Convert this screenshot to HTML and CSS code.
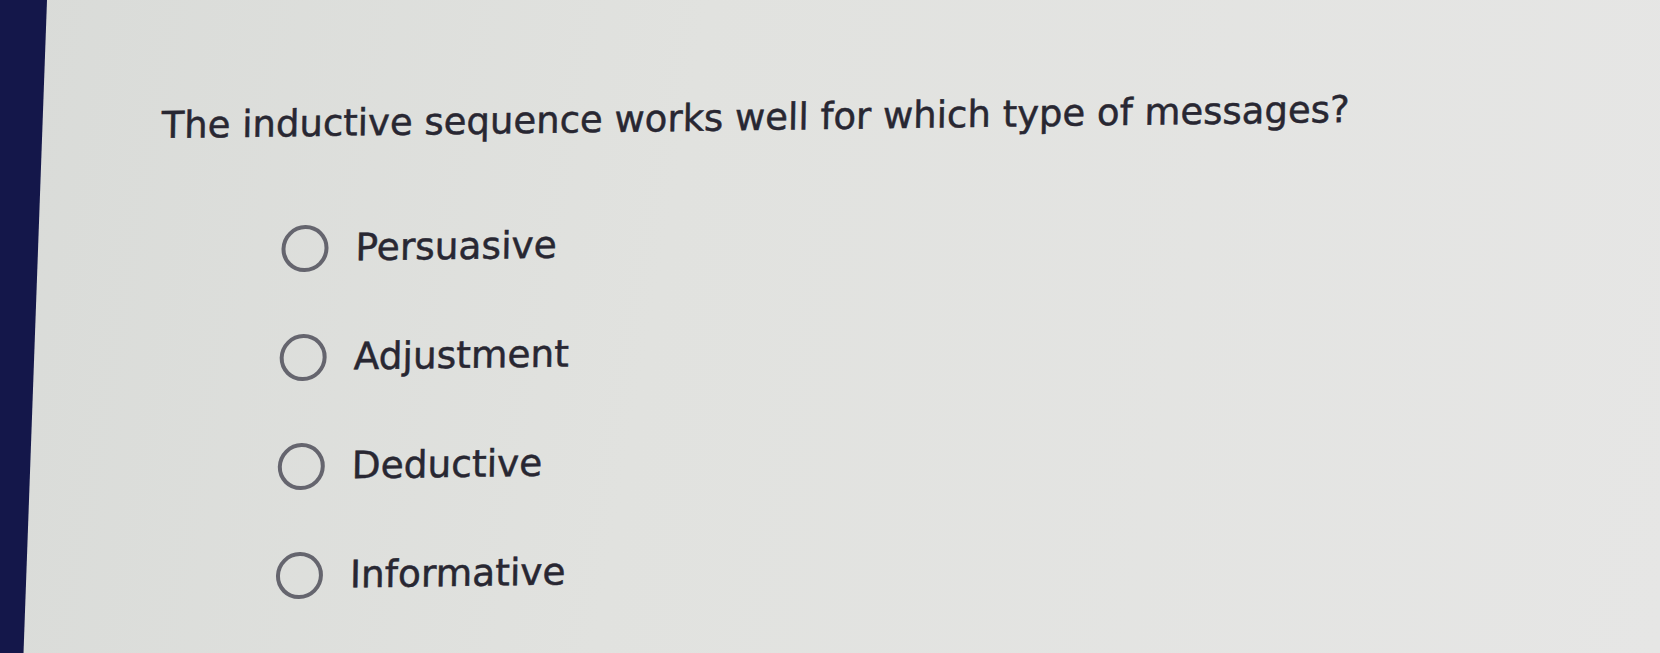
FILE: index.html
```html
<!DOCTYPE html>
<html lang="en">
<head>
  <meta charset="UTF-8">
  <meta name="viewport" content="width=device-width, initial-scale=1.0">
  <link rel="stylesheet" href="styles.css">
</head>
<body>

  <div class="side-bar"></div>

  <main class="quiz">
    <div class="question">
      <h1 class="question-text">The inductive sequence works well for which type of messages?</h1>

      <ul class="choice-list">
        <li><label class="choice"><input type="radio" name="answer"> <span>Persuasive</span></label></li>
        <li><label class="choice"><input type="radio" name="answer"> <span>Adjustment</span></label></li>
        <li><label class="choice"><input type="radio" name="answer"> <span>Deductive</span></label></li>
        <li><label class="choice"><input type="radio" name="answer"> <span>Informative</span></label></li>
      </ul>
    </div>
  </main>

</body>
</html>
```

FILE: styles.css
```css
body {
  margin: 0;
  height: 653px;
  display: flex;
  overflow: hidden;
  font-family: 'DejaVu Sans', Verdana, sans-serif;
  color: #282732;
  background: linear-gradient(100deg, #d9dbd8 0%, #e1e2df 40%, #e6e6e5 100%);
}

.side-bar {
  width: 47px;
  flex-shrink: 0;
  background-color: #14174a;
  clip-path: polygon(0 0, 100% 0, 50% 100%, 0 100%);
}

.quiz {
  flex: 1;
  padding: 104px 0 0 115px;
}

/* the photo is taken at a slight angle */
.question {
  transform-origin: 0 0;
  transform: matrix(1, -0.0135, -0.017, 1, 0, 0);
  -webkit-text-stroke: 0.5px currentColor;
}

.question-text {
  margin: 0;
  font-size: 37px;
  font-weight: normal;
  line-height: 44px;
  white-space: nowrap;
}

.choice-list {
  list-style: none;
  margin: 78px 0 0;
  padding: 0 0 0 122px;
  display: flex;
  flex-direction: column;
  gap: 61px;
}

.choice {
  display: flex;
  align-items: center;
  gap: 27px;
  font-size: 37.5px;
  line-height: 48px;
  cursor: pointer;
}

.choice input {
  appearance: none;
  margin: 0;
  width: 47px;
  height: 47px;
  box-sizing: border-box;
  border: 4px solid #65656e;
  border-radius: 50%;
  background: transparent;
}
```
